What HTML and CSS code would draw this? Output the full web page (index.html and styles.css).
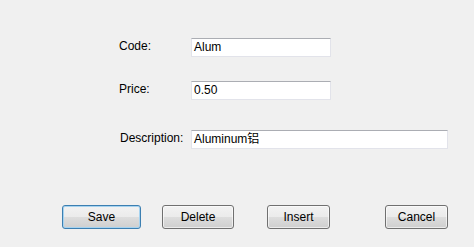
FILE: index.html
```html
<!DOCTYPE html>
<html>
<head>
<meta charset="utf-8">
<link rel="stylesheet" href="styles.css">
</head>
<body>
<div class="form">
  <div class="fields">
    <div class="row row-code">
      <span class="label">Code:</span>
      <div class="input short">Alum</div>
    </div>
    <div class="row row-price">
      <span class="label">Price:</span>
      <div class="input short">0.50</div>
    </div>
    <div class="row row-desc">
      <span class="label">Description:</span>
      <div class="input long">Aluminum铝</div>
    </div>
  </div>
  <div class="buttons">
    <button class="btn btn-save">Save</button>
    <button class="btn btn-delete">Delete</button>
    <button class="btn btn-insert">Insert</button>
    <button class="btn btn-cancel">Cancel</button>
  </div>
</div>
</body>
</html>
```

FILE: styles.css
```css
html, body {
  margin: 0;
  padding: 0;
  background: #f0f0f0;
  width: 474px;
  height: 247px;
  overflow: hidden;
}
.form {
  font-family: "Liberation Sans", Arial, "Noto Sans CJK SC", sans-serif;
  font-size: 12px;
  color: #000;
  display: flex;
  flex-direction: column;
}
.fields {
  display: flex;
  flex-direction: column;
  padding-top: 38px;
  padding-left: 119px;
}
.row {
  display: flex;
  align-items: center;
  height: 19px;
}
.row-price { margin-top: 24px; }
.row-desc { margin-top: 30px; }
.label {
  width: 72px;
  line-height: 19px;
  position: relative;
  top: -1px;
}
.row-desc .label { margin-left: 1px; width: 71px; }
.input {
  box-sizing: border-box;
  height: 19px;
  background: #fff;
  border: 1px solid #e2e3ea;
  border-top-color: #abadb3;
  padding-left: 2px;
  line-height: 17px;
}
.short { width: 140px; }
.long { width: 257px; }
.buttons {
  display: flex;
  padding-top: 56px;
  padding-left: 62px;
}
.btn {
  box-sizing: border-box;
  height: 24px;
  font-family: "Liberation Sans", Arial, sans-serif;
  font-size: 12px;
  color: #000;
  border: 1px solid #707070;
  border-radius: 3px;
  background: linear-gradient(to bottom, #f2f2f2 0%, #ebebeb 50%, #dddddd 51%, #cfcfcf 100%);
  box-shadow: inset 0 0 0 1px rgba(255,255,255,0.6);
  padding: 0;
  margin: 0;
}
.btn-save {
  width: 79px;
  border-color: #3c7fb1;
  box-shadow: inset 0 0 0 1px #a6d3f0;
}
.btn-delete { width: 72px; margin-left: 21px; }
.btn-insert { width: 63px; margin-left: 33px; }
.btn-cancel { width: 63px; margin-left: 55px; }
```
